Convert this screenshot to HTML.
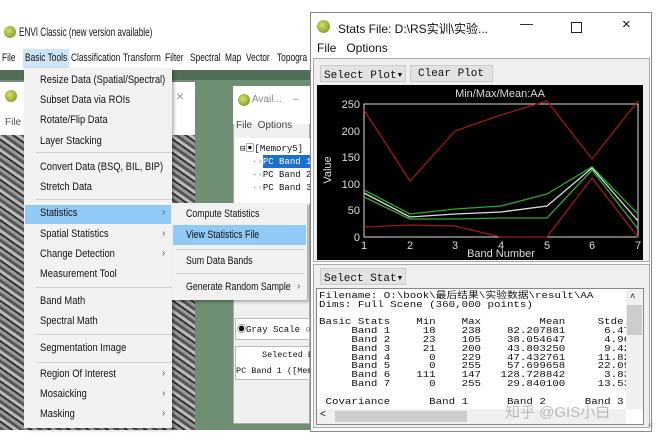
<!DOCTYPE html>
<html><head><meta charset="utf-8"><style>
*{margin:0;padding:0;box-sizing:border-box}
body{width:656px;height:440px;background:#fff;position:relative;overflow:hidden;font-family:"Liberation Sans","Noto Sans CJK SC",sans-serif;font-size:11px;color:#111}
.a{position:absolute;white-space:nowrap}
.mono{font-family:"Liberation Mono","Noto Sans CJK SC",monospace;white-space:pre}
.mi{position:absolute;left:40px;font-size:11px;transform:scaleX(.85);transform-origin:left}
.sep{position:absolute;left:36px;width:136px;height:1px;background:#d0d0d0}
.arr{position:absolute;left:162px;font-size:10px;color:#555}
.mb{position:absolute;top:52px;font-size:11px;transform:scaleX(.76);transform-origin:left;white-space:nowrap}
</style></head><body>
<!-- left app -->
<div class="a" style="left:4px;top:26px;width:12px;height:12px;border-radius:50%;background:radial-gradient(circle at 40% 40%,#d8e060,#6a8a20)"></div>
<div class="a" style="left:19px;top:25px;font-size:12px;transform:scaleX(.68);transform-origin:left">ENVI Classic (new version available)</div>
<div class="a" style="left:0;top:48px;width:310px;height:20px;background:#fff"></div>
<div class="a" style="left:23px;top:49px;width:46px;height:19px;background:#cce4f7"></div>
<div class="mb" style="left:2px">File</div>
<div class="mb" style="left:25px">Basic Tools</div>
<div class="mb" style="left:71px">Classification</div>
<div class="mb" style="left:123px">Transform</div>
<div class="mb" style="left:165px">Filter</div>
<div class="mb" style="left:190px">Spectral</div>
<div class="mb" style="left:225px">Map</div>
<div class="mb" style="left:246px">Vector</div>
<div class="mb" style="left:277px">Topogra</div>
<div class="a" style="left:0;top:70px;width:310px;height:360px;background:#6e8f72"></div>
<div class="a" style="left:0;top:70px;width:310px;height:10px;background:#4f6e55"></div>
<!-- left window -->
<div class="a" style="left:0;top:82px;width:195px;height:348px;background:#fff"></div>
<div class="a" style="left:5px;top:90px;width:12px;height:12px;border-radius:50%;background:radial-gradient(circle at 40% 40%,#d8e060,#6a8a20)"></div>
<div class="a" style="left:176px;top:88px;font-size:14px;color:#999">×</div>
<div class="a" style="left:5px;top:117px;font-size:10px;color:#555">File</div>
<div class="a" style="left:0;top:135px;width:195px;height:295px;background:repeating-linear-gradient(35deg,#555 0 3px,#999 3px 6px,#333 6px 8px,#bbb 8px 11px)"></div>
<!-- avail window -->
<div class="a" style="left:233px;top:86px;width:77px;height:338px;background:#f0f0f0;border:1px solid #aaa"></div>
<div class="a" style="left:233px;top:86px;width:77px;height:38px;background:#fff"></div>
<div class="a" style="left:238px;top:94px;width:12px;height:12px;border-radius:50%;background:radial-gradient(circle at 40% 40%,#d8e060,#6a8a20)"></div>
<div class="a" style="left:252px;top:94px;font-size:10px;color:#888">Avail...&nbsp;&nbsp;&nbsp; –</div>
<div class="a" style="left:236px;top:120px;font-size:10px;color:#444">File&nbsp; Options</div>
<div class="a" style="left:235px;top:138px;width:75px;height:66px;background:#fff"></div>
<div class="a mono" style="left:240px;top:141px;font-size:9px">⊟▣[Memory5]</div>
<div class="a" style="left:263px;top:155px;width:47px;height:13px;background:#1a6fd0"></div>
<div class="a mono" style="left:252px;top:156px;font-size:9px;line-height:13px"><span style="color:#888">·▫</span><span style="color:#fff">PC Band 1 (</span>
<span style="color:#888">·▫</span>PC Band 2 (
<span style="color:#888">·▫</span>PC Band 3 (</div>
<div class="a" style="left:235px;top:318px;width:75px;height:22px;background:#fff;border:1px solid #bbb"></div>
<div class="a mono" style="left:237px;top:322px;font-size:9px">◉Gray Scale ○</div>
<div class="a" style="left:235px;top:346px;width:75px;height:34px;background:#fff;border:1px solid #bbb"></div>
<div class="a mono" style="left:262px;top:350px;font-size:8.5px">Selected Bar</div>
<div class="a mono" style="left:236px;top:366px;font-size:8.5px">PC Band 1 ([Memory</div>
<!-- dropdown -->
<div class="a" style="left:24px;top:68px;width:148px;height:360px;background:#f2f2f2;box-shadow:2px 2px 3px rgba(0,0,0,.3)"></div>
<div class="a" style="left:25px;top:205px;width:146px;height:19px;background:#91c9f7"></div>
<div class="mi" style="top:74px">Resize Data (Spatial/Spectral)</div>
<div class="mi" style="top:94px">Subset Data via ROIs</div>
<div class="mi" style="top:114px">Rotate/Flip Data</div>
<div class="mi" style="top:135px">Layer Stacking</div>
<div class="sep" style="top:152px"></div>
<div class="mi" style="top:161px">Convert Data (BSQ, BIL, BIP)</div>
<div class="mi" style="top:181px">Stretch Data</div>
<div class="sep" style="top:199px"></div>
<div class="mi" style="top:207px">Statistics</div><div class="arr" style="top:207px">›</div>
<div class="mi" style="top:228px">Spatial Statistics</div><div class="arr" style="top:228px">›</div>
<div class="mi" style="top:248px">Change Detection</div><div class="arr" style="top:248px">›</div>
<div class="mi" style="top:268px">Measurement Tool</div>
<div class="sep" style="top:287px"></div>
<div class="mi" style="top:295px">Band Math</div>
<div class="mi" style="top:315px">Spectral Math</div>
<div class="sep" style="top:334px"></div>
<div class="mi" style="top:342px">Segmentation Image</div>
<div class="sep" style="top:362px"></div>
<div class="mi" style="top:368px">Region Of Interest</div><div class="arr" style="top:368px">›</div>
<div class="mi" style="top:388px">Mosaicking</div><div class="arr" style="top:388px">›</div>
<div class="mi" style="top:408px">Masking</div><div class="arr" style="top:408px">›</div>
<!-- submenu -->
<div class="a" style="left:172px;top:203px;width:135px;height:97px;background:#f2f2f2;box-shadow:2px 2px 3px rgba(0,0,0,.3)"></div>
<div class="a" style="left:173px;top:225px;width:133px;height:20px;background:#91c9f7"></div>
<div class="a" style="left:186px;top:208px;transform:scaleX(.8);transform-origin:left">Compute Statistics</div>
<div class="a" style="left:186px;top:229px;transform:scaleX(.8);transform-origin:left">View Statistics File</div>
<div class="a" style="left:176px;top:249px;width:128px;height:1px;background:#d0d0d0"></div>
<div class="a" style="left:186px;top:255px;transform:scaleX(.8);transform-origin:left">Sum Data Bands</div>
<div class="a" style="left:176px;top:273px;width:128px;height:1px;background:#d0d0d0"></div>
<div class="a" style="left:186px;top:281px;transform:scaleX(.8);transform-origin:left">Generate Random Sample</div>
<div class="a" style="left:297px;top:281px;font-size:10px;color:#555">›</div>
<!-- stats window -->
<div class="a" style="left:310px;top:12px;width:342px;height:420px;background:#fff;border:1px solid #888"></div>
<div class="a" style="left:317px;top:20px;width:13px;height:13px;border-radius:50%;background:radial-gradient(circle at 40% 40%,#d8e060,#6a8a20)"></div>
<div class="a" style="left:338px;top:20px;font-size:12px">Stats File: D:\RS实训\实验...</div>
<div class="a" style="left:520px;top:16px;font-size:13px">—</div>
<div class="a" style="left:571px;top:22px;width:11px;height:11px;border:1px solid #222"></div>
<div class="a" style="left:622px;top:16px;font-size:15px">×</div>
<div class="a" style="left:317px;top:41px;font-size:12px">File&nbsp;&nbsp; Options</div>
<div class="a" style="left:313px;top:58px;width:337px;height:204px;background:#efefef;border:1px solid #aaa"></div>
<div class="a mono" style="left:320px;top:65px;width:86px;height:17px;background:#e2e2e2;border:1px solid #ccc;font-size:11px;padding:2px 0 0 3px">Select Plot▾</div>
<div class="a mono" style="left:410px;top:65px;width:83px;height:17px;background:#e2e2e2;border:1px solid #ccc;font-size:11px;padding:2px 0 0 7px">Clear Plot</div>
<div class="a" style="left:317px;top:85px;width:326px;height:175px;background:#000"></div>
<svg class="a" style="left:0;top:0" width="656" height="440" viewBox="0 0 656 440">
<g fill="none" stroke="#ddd" stroke-width="1">
<rect x="364" y="104" width="274" height="133"/>
</g>
<g font-family="Liberation Sans,sans-serif" font-size="11" fill="#ddd">
<text x="500" y="97" text-anchor="middle">Min/Max/Mean:AA</text>
<text x="360" y="108" text-anchor="end">250</text>
<text x="360" y="135" text-anchor="end">200</text>
<text x="360" y="161" text-anchor="end">150</text>
<text x="360" y="188" text-anchor="end">100</text>
<text x="360" y="214" text-anchor="end">50</text>
<text x="360" y="241" text-anchor="end">0</text>
<text x="364" y="249" text-anchor="middle">1</text><text x="410" y="249" text-anchor="middle">2</text><text x="455" y="249" text-anchor="middle">3</text><text x="501" y="249" text-anchor="middle">4</text><text x="547" y="249" text-anchor="middle">5</text><text x="592" y="249" text-anchor="middle">6</text><text x="638" y="249" text-anchor="middle">7</text>
<text x="501" y="257" text-anchor="middle">Band Number</text>
<text transform="translate(331,170) rotate(-90)" text-anchor="middle">Value</text>
</g>
<g fill="none" stroke-width="1.3">
<polyline stroke="#a01818" points="364,110 410,181 455,131 501,115 547,101 592,159 638,101"/>
<polyline stroke="#a01818" points="364,227 410,225 455,226 501,237 547,237 592,178 638,237"/>
<polyline stroke="#2fa82f" points="364,190 410,214 455,209 501,206 547,194 592,167 638,214"/>
<polyline stroke="#ddd" points="364,193 410,217 455,214 501,212 547,206 592,168 638,221"/>
<polyline stroke="#2fa82f" points="364,197 410,219 455,219 501,218 547,218 592,170 638,229"/>
</g>
</svg>
<div class="a" style="left:313px;top:264px;width:337px;height:164px;background:#efefef;border:1px solid #aaa"></div>
<div class="a mono" style="left:320px;top:268px;width:86px;height:17px;background:#e2e2e2;border:1px solid #ccc;font-size:11px;padding:2px 0 0 3px">Select Stat▾</div>
<div class="a" style="left:316px;top:288px;width:328px;height:137px;background:#fff;border:1px solid #888"></div>
<div class="a" style="left:317px;top:289px;width:309px;height:120px;overflow:hidden">
<div class="mono" style="position:absolute;left:2px;top:3px;font-size:9px;line-height:8.8px;color:#111;transform:scaleX(1.2);transform-origin:left top">Filename: O:\book\最后结果\实验数据\result\AA
Dims: Full Scene (360,000 points)

Basic Stats    Min    Max         Mean     Stde
     Band 1     18    238    82.207881      6.47170
     Band 2     23    105    38.054647      4.96089
     Band 3     21    200    43.803250      9.42080
     Band 4      0    229    47.432761     11.82061
     Band 5      0    255    57.699658     22.09821
     Band 6    111    147   128.728842      3.83999
     Band 7      0    255    29.840100     13.53464

 Covariance      Band 1      Band 2      Band 3</div>
</div>
<div class="a" style="left:626px;top:289px;width:17px;height:120px;background:#f0f0f0"></div>
<div class="a" style="left:627px;top:305px;width:15px;height:30px;background:#cdcdcd"></div>
<div class="a" style="left:630px;top:291px;font-size:9px">˄</div>
<div class="a" style="left:317px;top:409px;width:309px;height:15px;background:#f0f0f0"></div>
<div class="a" style="left:335px;top:411px;width:132px;height:11px;background:#cdcdcd"></div>
<div class="a" style="left:320px;top:409px;font-size:10px">&lt;</div>
<div class="a" style="left:505px;top:401px;font-size:15px;color:rgba(140,140,140,.55)">知乎 @GIS小白</div>
<div class="a" style="left:648px;top:420px;font-size:9px;color:#888">&lt;</div>
</body></html>
